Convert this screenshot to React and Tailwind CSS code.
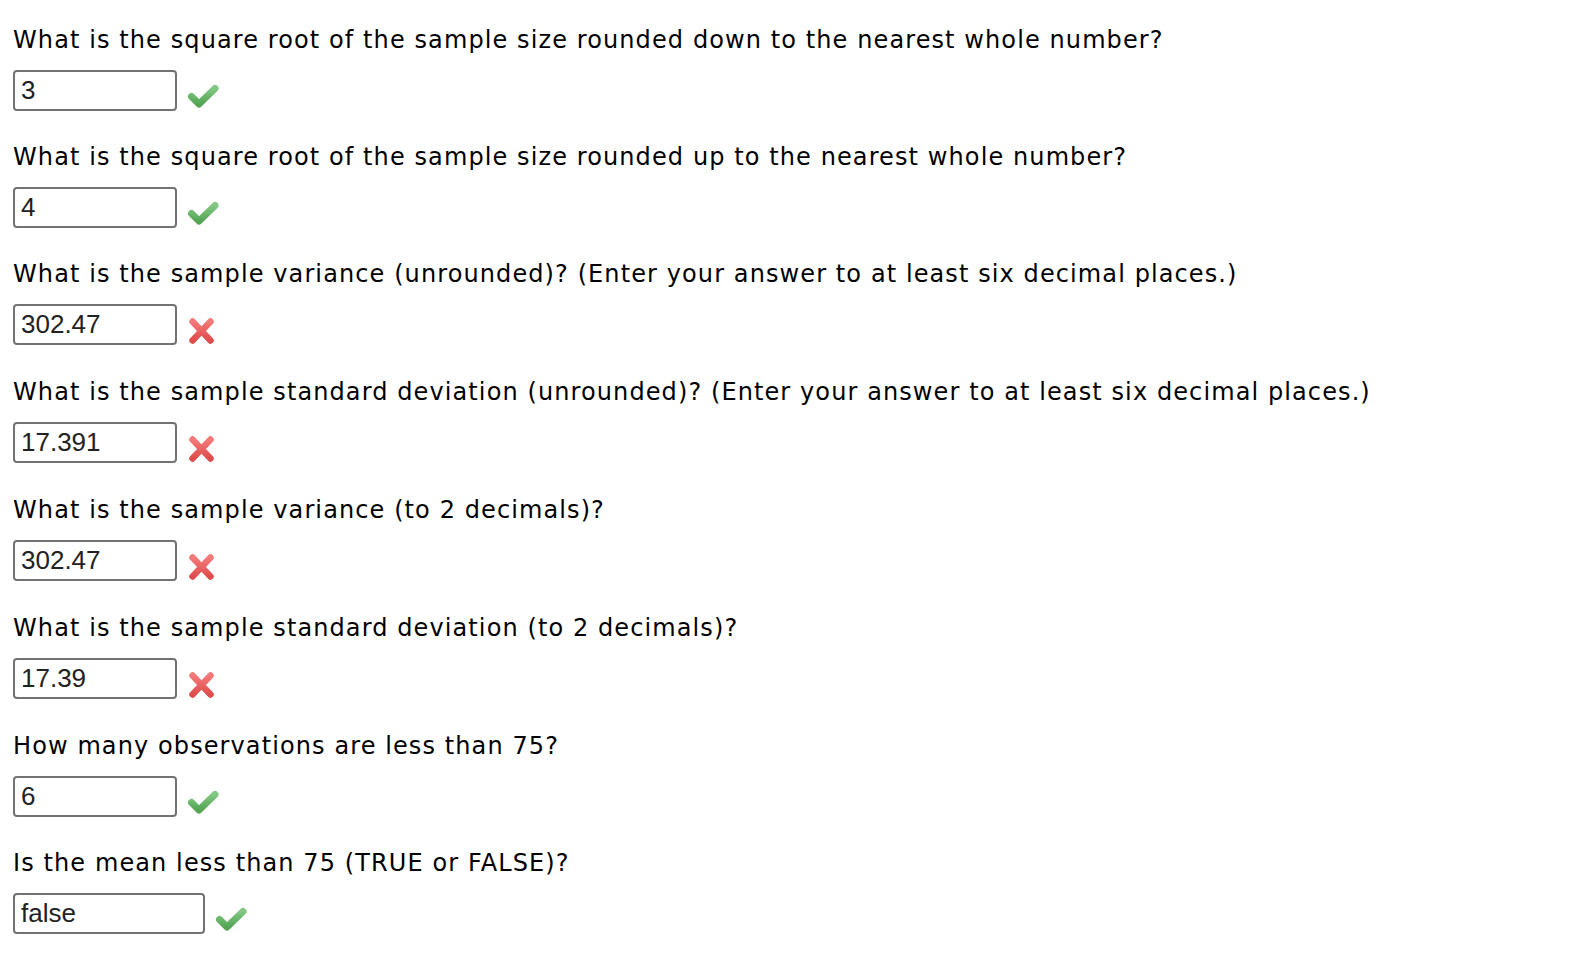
import React from "react";

const items = [
  { q: "What is the square root of the sample size rounded down to the nearest whole number?", a: "3", ok: true },
  { q: "What is the square root of the sample size rounded up to the nearest whole number?", a: "4", ok: true },
  { q: "What is the sample variance (unrounded)? (Enter your answer to at least six decimal places.)", a: "302.47", ok: false },
  { q: "What is the sample standard deviation (unrounded)? (Enter your answer to at least six decimal places.)", a: "17.391", ok: false },
  { q: "What is the sample variance (to 2 decimals)?", a: "302.47", ok: false },
  { q: "What is the sample standard deviation (to 2 decimals)?", a: "17.39", ok: false },
  { q: "How many observations are less than 75?", a: "6", ok: true },
  { q: "Is the mean less than 75 (TRUE or FALSE)?", a: "false", ok: true, wide: true },
];

function Check() {
  return (
    <svg width="32" height="26" viewBox="0 0 32 26" className="mt-[13px] ml-[10px] shrink-0">
      <defs>
        <linearGradient id="cg" x1="0" y1="0" x2="0" y2="1">
          <stop offset="0" stopColor="#82c882" />
          <stop offset="1" stopColor="#55a555" />
        </linearGradient>
      </defs>
      <path d="M4.5 13.5 L12 21 L28 5.5" fill="none" stroke="url(#cg)" strokeWidth="7" strokeLinecap="round" strokeLinejoin="round" />
    </svg>
  );
}

function Cross() {
  return (
    <svg width="30" height="30" viewBox="0 0 30 30" className="mt-[12px] ml-[10px] shrink-0">
      <defs>
        <linearGradient id="xg" x1="0" y1="0" x2="0" y2="1">
          <stop offset="0" stopColor="#f47a7a" />
          <stop offset="1" stopColor="#e04c4c" />
        </linearGradient>
      </defs>
      <path d="M5.5 5.5 L23.5 24.5 M23.5 5.5 L5.5 24.5" fill="none" stroke="url(#xg)" strokeWidth="6.5" strokeLinecap="round" />
    </svg>
  );
}

export default function App() {
  return (
    <div className="bg-white min-h-screen pl-[13px] pt-[25px]">
      {items.map((it, i) => (
        <div key={i} className="mb-[31px]">
          <div
            className="h-[30px] leading-[30px] text-[24px] tracking-[1.1px] text-black whitespace-nowrap"
            style={{ fontFamily: '"DejaVu Sans", Verdana, sans-serif' }}
          >
            {it.q}
          </div>
          <div className="flex items-start mt-[15px]">
            <div
              className={`h-[41px] ${it.wide ? "w-[192px]" : "w-[164px]"} border-2 border-[#727272] rounded-[4px] pl-[6px] flex items-center text-[26px] text-[#222]`}
              style={{ fontFamily: '"Liberation Sans", Arial, sans-serif' }}
            >
              {it.a}
            </div>
            {it.ok ? <Check /> : <Cross />}
          </div>
        </div>
      ))}
    </div>
  );
}
